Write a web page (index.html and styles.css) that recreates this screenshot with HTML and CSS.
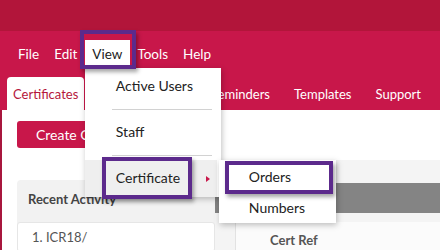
FILE: index.html
```html
<!DOCTYPE html>
<html lang="en">
<head>
<meta charset="utf-8">
<title>Certificates</title>
<link rel="stylesheet" href="styles.css">
</head>
<body>
<div class="app">
  <div class="titlebar"></div>
  <nav class="menubar">
    <span class="menu">File</span>
    <span class="menu">Edit</span>
    <span class="menu menu-open">View
      <div class="dropdown">
        <div class="dd-item">Active Users</div>
        <div class="dd-sep"></div>
        <div class="dd-item">Staff</div>
        <div class="dd-sep"></div>
        <div class="dd-item dd-active">Certificate<span class="dd-arrow"></span>
          <div class="submenu">
            <div class="sub-item sub-first">Orders<span class="callout callout-orders"></span></div>
            <div class="sub-item sub-last">Numbers</div>
          </div>
          <span class="callout callout-cert"></span>
        </div>
      </div>
      <span class="callout callout-view"></span>
    </span>
    <span class="menu">Tools</span>
    <span class="menu">Help</span>
  </nav>
  <div class="tabbar">
    <span class="tab tab-active">Certificates</span>
    <span class="tab tab-fill">Customers</span>
    <span class="tab">Reminders</span>
    <span class="tab">Templates</span>
    <span class="tab">Support</span>
  </div>
  <main class="content">
    <div class="toolbar"><button class="btn-primary">Create Certificate</button></div>
    <div class="panels">
      <section class="card-recent">
        <h3 class="card-title">Recent Activity</h3>
        <ul class="activity-list"><li class="activity-item">1. ICR18/</li></ul>
      </section>
      <section class="orders-panel">
        <div class="panel-bar"></div>
        <table class="grid"><thead><tr><th class="grid-head">Cert Ref</th></tr></thead></table>
      </section>
    </div>
  </main>
</div>
</body>
</html>
```
FILE: styles.css
```css
* { box-sizing: border-box; }
html, body { margin: 0; padding: 0; }
body { width: 440px; height: 250px; overflow: hidden; background: #fff; }
.app {
  position: relative;
  width: 440px;
  height: 250px;
  overflow: hidden;
  font-family: Lato, "Liberation Sans", sans-serif;
}
.titlebar { height: 31px; background: #b2153a; }
.menubar {
  display: flex;
  height: 37px;
  padding: 9px 0 0 10.5px;
  background: #c8174a;
}
.menu {
  position: relative;
  padding: 0 7.5px;
  height: 28px;
  line-height: 28px;
  font-size: 13.5px;
  color: #fff;
}
.menu-open { background: #fff; color: #222; z-index: 10; }
.tabbar {
  display: flex;
  height: 42px;
  padding: 9px 7px 0;
  background: #c8174a;
}
.tab {
  padding: 0 12px;
  height: 33px;
  line-height: 34px;
  font-size: 13px;
  color: #fff;
  white-space: nowrap;
}
.tab-active {
  padding: 0 6px;
  background: #fff;
  color: #b5163b;
  border-radius: 4px 4px 0 0;
}
.tab-fill { flex: 1; }
.content {
  height: 140px;
  background: #fff;
  border-left: 2px solid #a8163d;
}
.toolbar { padding: 11px 0 0 15px; }
.btn-primary {
  display: block;
  height: 27px;
  padding: 0 19px;
  border: 0;
  border-radius: 3px;
  background: #c8174a;
  color: #fff;
  font-family: Lato, "Liberation Sans", sans-serif;
  font-size: 14px;
}
.panels { display: flex; margin-top: 12px; }
.card-recent {
  width: 198px;
  height: 80px;
  margin: 20px 0 0 15px;
  background: #f2f2f2;
  border-radius: 4px 4px 0 0;
}
.card-title {
  margin: 0;
  padding: 11px 11px 0;
  font-size: 13px;
  line-height: 16px;
  font-weight: 700;
  color: #444;
}
.activity-list {
  margin: 15px 0 0;
  padding: 0;
  list-style: none;
  background: #fff;
  border: 1px solid #e6e6e6;
  border-radius: 3px;
}
.activity-item {
  padding: 6px 14px;
  font-size: 13px;
  line-height: 16px;
  color: #555;
}
.orders-panel {
  flex: 1;
  height: 90px;
  padding-top: 23px;
  background: #f4f4f4;
}
.panel-bar { height: 30px; background: #848484; }
.grid {
  width: calc(100% - 20px);
  margin: 9px 0 0 20px;
  border-collapse: collapse;
  background: #fbfbfb;
  border-left: 1px solid #e2e2e2;
}
.grid-head {
  padding: 10px 0 10px 34px;
  text-align: left;
  font-size: 13px;
  line-height: 16px;
  font-weight: 700;
  color: #555;
}
.dropdown {
  position: absolute;
  top: 100%;
  left: 0;
  width: 136px;
  background: #fff;
  box-shadow: 1px 2px 6px rgba(0, 0, 0, 0.25);
}
.dd-item {
  position: relative;
  height: 37px;
  margin-right: 4px;
  padding-left: 31px;
  line-height: 36px;
  font-size: 14px;
  color: #222;
  white-space: nowrap;
}
.dd-active { background: #efefef; }
.dd-sep { height: 1px; margin: 4px 9px 4px 27px; background: #d2d2d2; }
.dd-arrow {
  position: absolute;
  right: 7px;
  top: 16px;
  width: 0;
  height: 0;
  border-left: 4px solid #c8174a;
  border-top: 3px solid transparent;
  border-bottom: 3px solid transparent;
}
.submenu {
  position: absolute;
  top: 0;
  left: 134px;
  width: 117px;
  background: #fff;
  box-shadow: 1px 2px 6px rgba(0, 0, 0, 0.25);
}
.sub-item {
  position: relative;
  padding-left: 30px;
  font-size: 14px;
  color: #222;
}
.sub-first { height: 33px; line-height: 33px; }
.sub-last { height: 30px; line-height: 30px; }
.callout {
  position: absolute;
  border: 4px solid #5c2a8c;
  box-shadow: 2px 3px 4px rgba(0, 0, 0, 0.35);
  pointer-events: none;
  z-index: 20;
}
.callout-view { top: -10px; left: -5px; right: -6px; bottom: -1px; }
.callout-cert { top: -3px; left: 17px; width: 90px; height: 42px; }
.callout-orders { top: 1px; left: 6px; right: 3px; height: 33px; }
```
